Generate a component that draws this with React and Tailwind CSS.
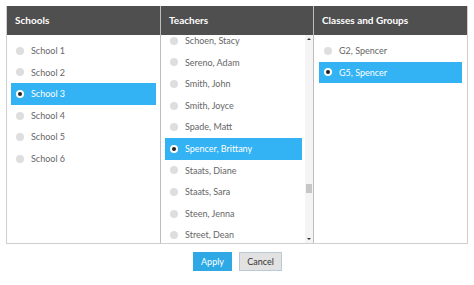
import React from "react";

const font = { fontFamily: "Lato, 'Open Sans', sans-serif" };

function Radio({ selected }) {
  if (selected) {
    return (
      <span className="flex h-[8px] w-[8px] items-center justify-center rounded-full bg-white">
        <span className="h-[4px] w-[4px] rounded-full bg-[#222]" />
      </span>
    );
  }
  return <span className="h-[8px] w-[8px] rounded-full bg-[#dedede]" />;
}

function Row({ label, selected }) {
  return (
    <div
      className={
        "flex h-[21.6px] shrink-0 items-center gap-[7px] pl-[5px] text-[9px] " +
        (selected ? "bg-[#33b2f4] text-white" : "text-[#666]")
      }
    >
      <Radio selected={selected} />
      <span>{label}</span>
    </div>
  );
}

function Header({ title }) {
  return (
    <div className="flex h-[29px] shrink-0 items-center bg-[#4f4f4f] pl-[8px] text-[10px] font-bold text-white">
      {title}
    </div>
  );
}

export default function App() {
  const schools = ["School 1", "School 2", "School 3", "School 4", "School 5", "School 6"];
  const teachers = [
    "Schoen, Stacy",
    "Sereno, Adam",
    "Smith, John",
    "Smith, Joyce",
    "Spade, Matt",
    "Spencer, Brittany",
    "Staats, Diane",
    "Staats, Sara",
    "Steen, Jenna",
    "Street, Dean",
    "Strong, Amy",
  ];
  const classes = ["G2, Spencer", "G5, Spencer"];

  return (
    <div className="h-[285px] w-[474px] bg-white" style={font}>
      <div className="pl-[6px] pt-[6px]">
        <div className="flex h-[238px] w-[462px] border-r border-b border-[#cfcfcf]">
          {/* Schools */}
          <div className="flex w-[154px] flex-col border-l border-[#cfcfcf]">
            <Header title="Schools" />
            <div className="flex flex-col px-[4px] pt-[5px]">
              {schools.map((s) => (
                <Row key={s} label={s} selected={s === "School 3"} />
              ))}
            </div>
          </div>
          {/* Teachers */}
          <div className="flex w-[153px] flex-col border-l border-[#bdbdbd]">
            <Header title="Teachers" />
            <div className="flex min-h-0 flex-1">
              <div className="flex min-h-0 flex-1 flex-col overflow-hidden pl-[4px] pr-[3px]">
                <div className="mt-[-5px] flex flex-col">
                  {teachers.map((t) => (
                    <Row key={t} label={t} selected={t === "Spencer, Brittany"} />
                  ))}
                </div>
              </div>
              <div className="flex w-[8px] flex-col items-center justify-between bg-[#f4f4f4] py-[2px]">
                <span className="mt-[1px] h-0 w-0 border-x-[2px] border-b-[2px] border-x-transparent border-b-[#333]" />
                <span className="mt-[144px] h-[9px] w-[6px] bg-[#c6c6c6]" />
                <span className="mt-auto mb-[1px] h-0 w-0 border-x-[2px] border-t-[2px] border-x-transparent border-t-[#333]" />
              </div>
            </div>
          </div>
          {/* Classes */}
          <div className="flex flex-1 flex-col border-l border-[#bdbdbd]">
            <Header title="Classes and Groups" />
            <div className="flex flex-col pl-[5px] pr-[5px] pt-[5px]">
              {classes.map((c) => (
                <Row key={c} label={c} selected={c === "G5, Spencer"} />
              ))}
            </div>
          </div>
        </div>
      </div>
      <div className="mt-[8px] flex justify-center gap-[7px] pl-[1px]">
        <button className="flex h-[19px] w-[39px] items-center justify-center bg-[#2ea9e6] text-[9px] leading-none text-white">
          Apply
        </button>
        <button className="flex h-[19px] w-[43px] items-center justify-center border border-[#b9c9d6] bg-[#e2e2e2] text-[9px] leading-none text-[#333]">
          Cancel
        </button>
      </div>
    </div>
  );
}
